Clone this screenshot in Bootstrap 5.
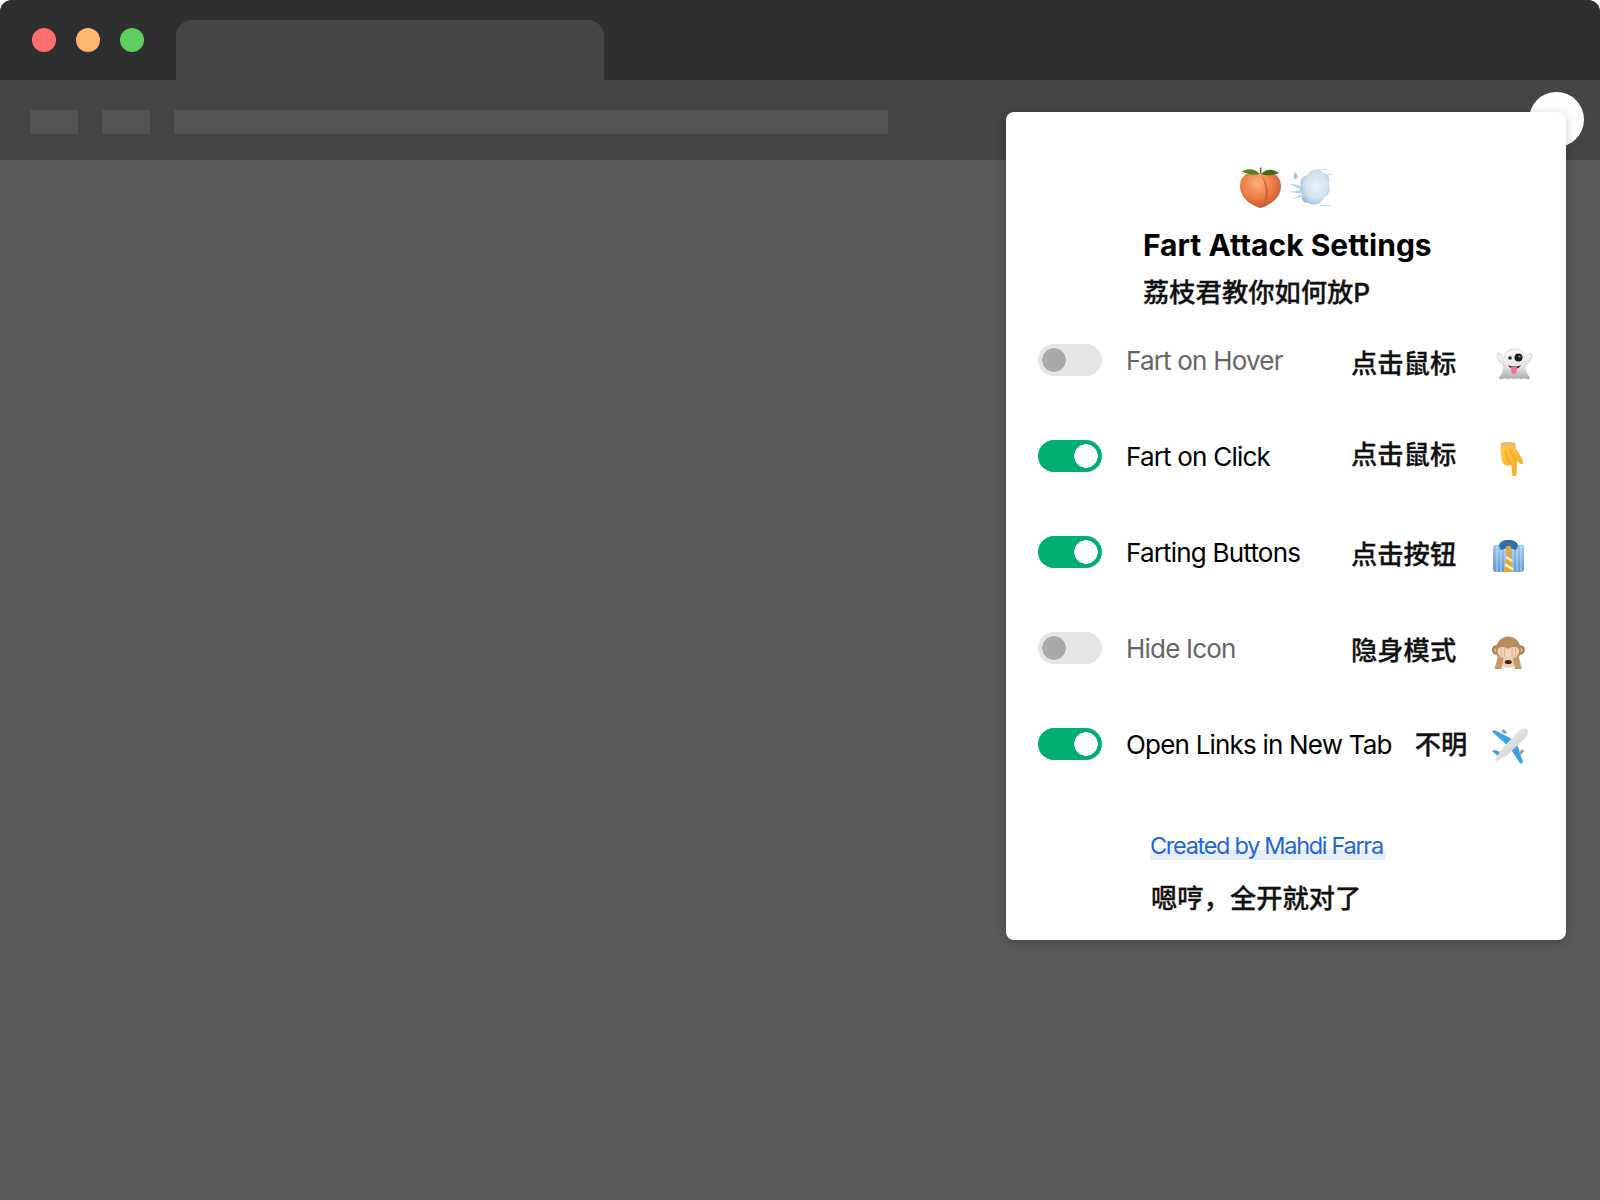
<!DOCTYPE html>
<html lang="en">
<head>
  <meta charset="UTF-8" />
  <meta name="viewport" content="width=device-width, initial-scale=1" />
  <title>Fart Attack Settings</title>
  <link href="https://cdn.jsdelivr.net/npm/bootstrap@5.3.3/dist/css/bootstrap.min.css" rel="stylesheet" />
  <style>
    body {
      background: #fff;
      font-family: Inter, "Noto Sans CJK SC", sans-serif;
      overflow: hidden;
    }

    .browser-win {
      height: 1200px;
      background: #585858;
      border-radius: 12px 12px 0 0;
      overflow: hidden;
    }

    .title-strip {
      height: 80px;
      background: #2f2f2f;
      padding-left: 32px;
    }

    .light-dot {
      width: 24px;
      height: 24px;
      border-radius: 50%;
      margin-right: 20px;
    }

    .dot-red { background: #ff6e6e; }
    .dot-amber { background: #ffb86f; }
    .dot-green { background: #5ccf5f; }

    .tab-shape {
      width: 428px;
      height: 60px;
      margin-top: 20px;
      margin-left: 12px;
      background: #454545;
      border-radius: 16px 16px 0 0;
    }

    .tool-strip {
      height: 80px;
      background: #454545;
      padding: 4px 0 0 30px;
      gap: 24px;
    }

    .tool-block {
      width: 48px;
      height: 24px;
      background: #545454;
    }

    .tool-address { width: 714px; }

    .ext-circle {
      left: 1529px;
      top: 92px;
      width: 55px;
      height: 55px;
      border-radius: 50%;
      background: #fff;
    }

    .fart-popup {
      left: 1006px;
      top: 112px;
      width: 560px;
      padding: 53px 30px 0 32px;
      background: #fff;
      border-radius: 8px;
      box-shadow: 0 2px 12px rgba(0, 0, 0, .2);
    }

    .head-emoji { height: 46px; gap: 4px; padding-right: 5px; }

    .popup-title {
      margin: 0;
      font-size: 30px;
      line-height: 36px;
      font-weight: 700;
      color: #000;
      white-space: nowrap;
    }

    .cn-note {
      font-size: 26.3px;
      line-height: 32px;
      font-weight: 500;
      -webkit-text-stroke: .3px #111;
      color: #111;
      white-space: nowrap;
    }

    .head-block { margin-top: 16px; margin-left: 105px; width: 290px; }
    .head-note { margin-top: 14px; }

    .fart-row {
      height: 96px;
      margin: 0;
      min-height: 0;
    }

    .form-switch .form-check-input.fart-switch {
      float: none;
      display: block;
      flex: none;
      width: 64px;
      height: 32px;
      margin: -2px 0 0;
      border: 0;
      border-radius: 16px;
      background-color: #e6e6e6;
      background-image: radial-gradient(circle at center, #aaa 11.5px, transparent 12px);
      background-size: 32px 32px;
      background-repeat: no-repeat;
      background-position: left center;
      box-shadow: none;
    }

    .form-switch .form-check-input.fart-switch:checked {
      background-color: #00ae70;
      background-image: radial-gradient(circle at center, #fff 11.5px, transparent 12px);
      background-position: right center;
    }

    .fart-label {
      margin-left: 24px;
      font-size: 26px;
      line-height: 36px;
      letter-spacing: -.8px;
      color: #000;
      opacity: 1;
      white-space: nowrap;
    }

    .fart-label.is-off { color: #666; }
    .label-fixed { width: 225px; }
    .label-long { margin-right: 23px; }
    .note-down { margin-top: 6px; }
    .note-up { margin-top: -4px; }
    .note-slight { margin-top: 3px; }
    .emoji-slot { flex: none; width: 46px; height: 44px; }

    .popup-foot {
      margin-top: 38px;
      margin-left: 112px;
      padding-bottom: 25px;
    }

    .credit-link {
      font-size: 23.5px;
      line-height: 30px;
      color: #1a66e0;
      text-decoration: none;
      background: linear-gradient(#e7eefa, #e7eefa) no-repeat left bottom / 100% 10px;
      padding: 0 2px 0 0;
      letter-spacing: -1.3px;
      white-space: nowrap;
    }

    .foot-note { margin-top: 22px; margin-left: 1px; }
  </style>
</head>
<body>

<div class="browser-win position-relative d-flex flex-column">
  <!-- Tabs -->
  <div class="title-strip d-flex align-items-center">
    <span class="light-dot dot-red"></span>
    <span class="light-dot dot-amber"></span>
    <span class="light-dot dot-green"></span>
    <span class="tab-shape"></span>
  </div>

  <!-- Toolbar -->
  <div class="tool-strip d-flex align-items-center">
    <span class="tool-block"></span>
    <span class="tool-block"></span>
    <span class="tool-block tool-address"></span>
  </div>

  <div class="ext-circle position-absolute"></div>

  <!-- Popup -->
  <div class="fart-popup position-absolute">
    <div class="head-emoji d-flex justify-content-center">
      <svg width="46" height="46" viewBox="0 0 46 46">
        <defs>
          <radialGradient id="peachFill" cx=".42" cy=".32" r=".75">
            <stop offset="0" stop-color="#f7b07c" />
            <stop offset=".5" stop-color="#ee8048" />
            <stop offset="1" stop-color="#c04c28" />
          </radialGradient>
        </defs>
        <path d="M23.5 43C14 40 3 33 3 21 3 12 10 7 16.5 7c3 0 5.5 1 7 3 1.500-2 4-3 7-3C37 7 44 12 44 21c0 12-11 19-20.500 22Z" fill="url(#peachFill)" />
        <path d="M24 10c3 5 5 12 4.500 20-.3 4-1.500 8-3 11 3-3 5-7 5.500-11 .5-8-2.500-16-7-20Z" fill="#c9592c" opacity=".7" />
        <path d="M23 9C18 3 10 3 5 6.500c5 3 13 4 18 2.500Z" fill="#55801f" />
        <path d="M24.500 9C29 3 37 4 42 8c-5 2.500-13 3-17.500 1Z" fill="#3f6b17" />
        <path d="M23 2.500h1.500L24.500 9H23Z" fill="#8a5a2c" />
      </svg>
      <svg width="46" height="46" viewBox="0 0 46 46">
        <defs>
          <radialGradient id="puffFill" cx=".55" cy=".45" r=".58">
            <stop offset="0" stop-color="#e8f2fb" />
            <stop offset=".65" stop-color="#d2e3f2" />
            <stop offset="1" stop-color="#9fbfd8" />
          </radialGradient>
        </defs>
        <path d="M14 21C12 15 16 10 21 10 22 4 33 3 36 8 41 8 44 14 41.500 18 44 23 43 31 37 32 36 38 27 42 21 38 16 39 13 33 16 30 13 28 12 24 14 21Z" fill="url(#puffFill)" />
        <path d="M3 19C8 19 13 20 17 23L17 25C12 24 8 22 3 19ZM3 27C8 26 12 25 17 26L17 28C12 28 8 28 3 27ZM5 34C9 32 12 30 17 29L18 31C13 32 9 33 5 34Z" fill="#b6d0e5" />
        <path d="M8 7C10 9 11.500 11 10.500 13 9.500 14.500 6.500 14 6.500 12 6.500 10 7.500 8.500 8 7Z" fill="#a6c6e0" />
        <path d="M30 4H41V5H31ZM33 40H44V41H33ZM38 9H45V10H39Z" fill="#cfdfec" />
      </svg>
    </div>

    <div class="head-block">
      <h1 class="popup-title">Fart Attack Settings</h1>
      <div class="cn-note head-note">荔枝君教你如何放P</div>
    </div>

    <div class="mt-1">
      <!-- row 1 -->
      <div class="form-check form-switch fart-row d-flex align-items-center p-0">
        <input class="form-check-input fart-switch" type="checkbox" role="switch" id="optHover" />
        <label class="form-check-label fart-label is-off label-fixed" for="optHover">Fart on Hover</label>
        <span class="cn-note note-down">点击鼠标</span>
        <svg class="emoji-slot ms-auto" viewBox="0 0 46 44">
          <defs>
            <linearGradient id="ghostFill" x1="0" y1="0" x2="0" y2="1">
              <stop offset="0" stop-color="#fbfbfb" />
              <stop offset=".6" stop-color="#e4e4e4" />
              <stop offset="1" stop-color="#a9a9a9" />
            </linearGradient>
          </defs>
          <path d="M24.500 10C18 10 15 14 14.500 19 13 18.500 11 16.500 10 15 8.500 13.500 6.500 15 7 17 7.500 21 11 25 14 26 14 31 12.500 35 9.500 38 9 39.500 10 40.500 11.500 40 14 39 16 39 18 40 20 39 22 39 24.500 40 27 39 29 39 31 40 33 39 35 39 37.500 40 39 40.500 40 39.500 39.500 38 36.500 35 35 31 35 26 38 25 41.500 21 42 17 42.500 15 40.500 13.500 39 15 38 16.500 36 18.500 34.500 19 34 14 30 10 24.500 10Z" fill="url(#ghostFill)" stroke="#bdbdbd" stroke-width=".6" />
          <circle cx="20" cy="19" r="1.800" fill="#222" />
          <circle cx="28.500" cy="18.500" r="4" fill="#1c1c1c" />
          <circle cx="29.500" cy="17.500" r="1.100" fill="#999" />
          <path d="M18 26C22 28 27 28 31 26 30 28 29 29 27 29.500H22C20 29 19 28 18 26Z" fill="#2b2b2b" />
          <path d="M21 28H27L26.500 33C26.200 35.500 22 35.500 21.500 33Z" fill="#f0709c" />
        </svg>
      </div>
      <!-- row 2 -->
      <div class="form-check form-switch fart-row d-flex align-items-center p-0">
        <input class="form-check-input fart-switch" type="checkbox" role="switch" id="optClick" checked />
        <label class="form-check-label fart-label label-fixed" for="optClick">Fart on Click</label>
        <span class="cn-note note-up">点击鼠标</span>
        <svg class="emoji-slot ms-auto" viewBox="0 0 46 44">
          <defs>
            <linearGradient id="handFill" x1="0" y1="0" x2="1" y2="1">
              <stop offset="0" stop-color="#ffcc4d" />
              <stop offset="1" stop-color="#f6a51f" />
            </linearGradient>
          </defs>
          <path d="M11 8C14 6.500 22 6.500 25 8L26 14C29 18 32 23 33 27 33.500 29.500 31 30 30 28.500L27 25.500 26.500 39.500C26.500 41.500 22 41.500 22 39.500L21.500 30C16 31.500 12.500 29.500 11.700 25 11 20 10 13 11 8Z" fill="url(#handFill)" />
          <path d="M11 8C14 6.500 22 6.500 25 8L25.400 10.500H10.800Z" fill="#f4b27e" />
          <path d="M15 15C15.500 20 17 25 21 29M20 13C21 18 23 23 26 26" stroke="#e5971c" stroke-width=".8" fill="none" />
        </svg>
      </div>
      <!-- row 3 -->
      <div class="form-check form-switch fart-row d-flex align-items-center p-0">
        <input class="form-check-input fart-switch" type="checkbox" role="switch" id="optButtons" checked />
        <label class="form-check-label fart-label label-fixed" for="optButtons">Farting Buttons</label>
        <span class="cn-note note-slight">点击按钮</span>
        <svg class="emoji-slot ms-auto" viewBox="0 -1 46 44">
          <defs>
            <linearGradient id="shirtFill" x1="0" y1="0" x2="0" y2="1">
              <stop offset="0" stop-color="#9cc6ea" />
              <stop offset="1" stop-color="#5e9ad4" />
            </linearGradient>
          </defs>
          <rect x="3" y="13" width="31" height="27" rx="3" fill="url(#shirtFill)" />
          <path d="M7 14V40M11 14V40M15 14V40M23 14V40M27 14V40M31 14V40" stroke="#e4f0fa" stroke-width="1" opacity=".7" />
          <path d="M9 13C10 10 13 8 18.500 8S27 10 28 13C28 15 26.500 18 25 18L18.500 15 12 18C10.500 18 9 15 9 13Z" fill="#2f6fa8" />
          <path d="M16.500 14H20.500L21.500 18 20.500 20 23 40H14L16.500 20 15.500 18Z" fill="#eaa62e" />
          <path d="M16.200 24L22.200 27.500 22.600 30.500 15.600 26.500ZM15.300 31L23.300 36 23.700 39 14.700 34Z" fill="#f7eed8" />
        </svg>
      </div>
      <!-- row 4 -->
      <div class="form-check form-switch fart-row d-flex align-items-center p-0">
        <input class="form-check-input fart-switch" type="checkbox" role="switch" id="optHide" />
        <label class="form-check-label fart-label is-off label-fixed" for="optHide">Hide Icon</label>
        <span class="cn-note note-slight">隐身模式</span>
        <svg class="emoji-slot ms-auto" viewBox="0 0 46 44">
          <circle cx="6.700" cy="23" r="4.800" fill="#a97c50" />
          <circle cx="30" cy="23" r="4.800" fill="#a97c50" />
          <circle cx="6.700" cy="23" r="2.600" fill="#e5b894" />
          <circle cx="30" cy="23" r="2.600" fill="#e5b894" />
          <ellipse cx="18.300" cy="23" rx="12.500" ry="13.500" fill="#b98b5c" />
          <ellipse cx="18.300" cy="34.500" rx="7.500" ry="6.500" fill="#f0cfae" />
          <ellipse cx="18.300" cy="35" rx="3.500" ry="2" fill="#3f2415" />
          <path d="M8 29 4.500 42H11.500L14 30ZM28.500 29 32 42H25L22.500 30Z" fill="#c9996a" />
          <path d="M7.500 24C7.500 21 10 19.500 13 20 15 20.300 17 21 18.300 22 19.500 21 21.500 20.300 23.500 20 26.500 19.500 29 21 29 24 29 28 26 31 22.500 31 20.500 31 19 30 18.300 29 17.500 30 16 31 14 31 10.500 31 7.500 28 7.500 24Z" fill="#f1d5b4" />
          <path d="M11 21V29M14.500 20.500V30M22 20.500V30M25.500 21V29" stroke="#cfa67c" stroke-width=".7" />
        </svg>
      </div>
      <!-- row 5 -->
      <div class="form-check form-switch fart-row d-flex align-items-center p-0">
        <input class="form-check-input fart-switch" type="checkbox" role="switch" id="optLinks" checked />
        <label class="form-check-label fart-label label-long" for="optLinks">Open Links in New Tab</label>
        <span class="cn-note">不明</span>
        <svg class="emoji-slot ms-auto" viewBox="0 0 46 44">
          <defs>
            <linearGradient id="planeBody" x1="0" y1="0" x2="1" y2="1">
              <stop offset="0" stop-color="#f8f8f8" />
              <stop offset=".6" stop-color="#d8d8d8" />
              <stop offset="1" stop-color="#8f8f8f" />
            </linearGradient>
          </defs>
          <path d="M2 8.500 4.500 7 24 17 28 24 33 39 30.500 41 20 25Z" fill="#3aa3e3" />
          <path d="M2 28 5 27 13 30 10 35Z" fill="#3aa3e3" />
          <path d="M9 34H8L10 37V35Z" fill="#2a86c4" />
          <rect x="12" y="7" width="5" height="3" rx="1" transform="rotate(35 14 8)" fill="#9c9c9c" />
          <rect x="29" y="28" width="5" height="3" rx="1" transform="rotate(-50 31 29)" fill="#9c9c9c" />
          <path d="M37 6.500C35 4.500 31 6 28 9L11.500 26 5 37 6.500 38 17.500 32 35 15C38 12 39 8.500 37 6.500Z" fill="url(#planeBody)" />
        </svg>
      </div>
    </div>

    <div class="popup-foot">
      <a class="credit-link" href="#">Created by Mahdi Farra</a>
      <div class="cn-note foot-note">嗯哼，全开就对了</div>
    </div>
  </div>
</div>

<script src="https://cdn.jsdelivr.net/npm/bootstrap@5.3.3/dist/js/bootstrap.bundle.min.js"></script>
</body>
</html>
